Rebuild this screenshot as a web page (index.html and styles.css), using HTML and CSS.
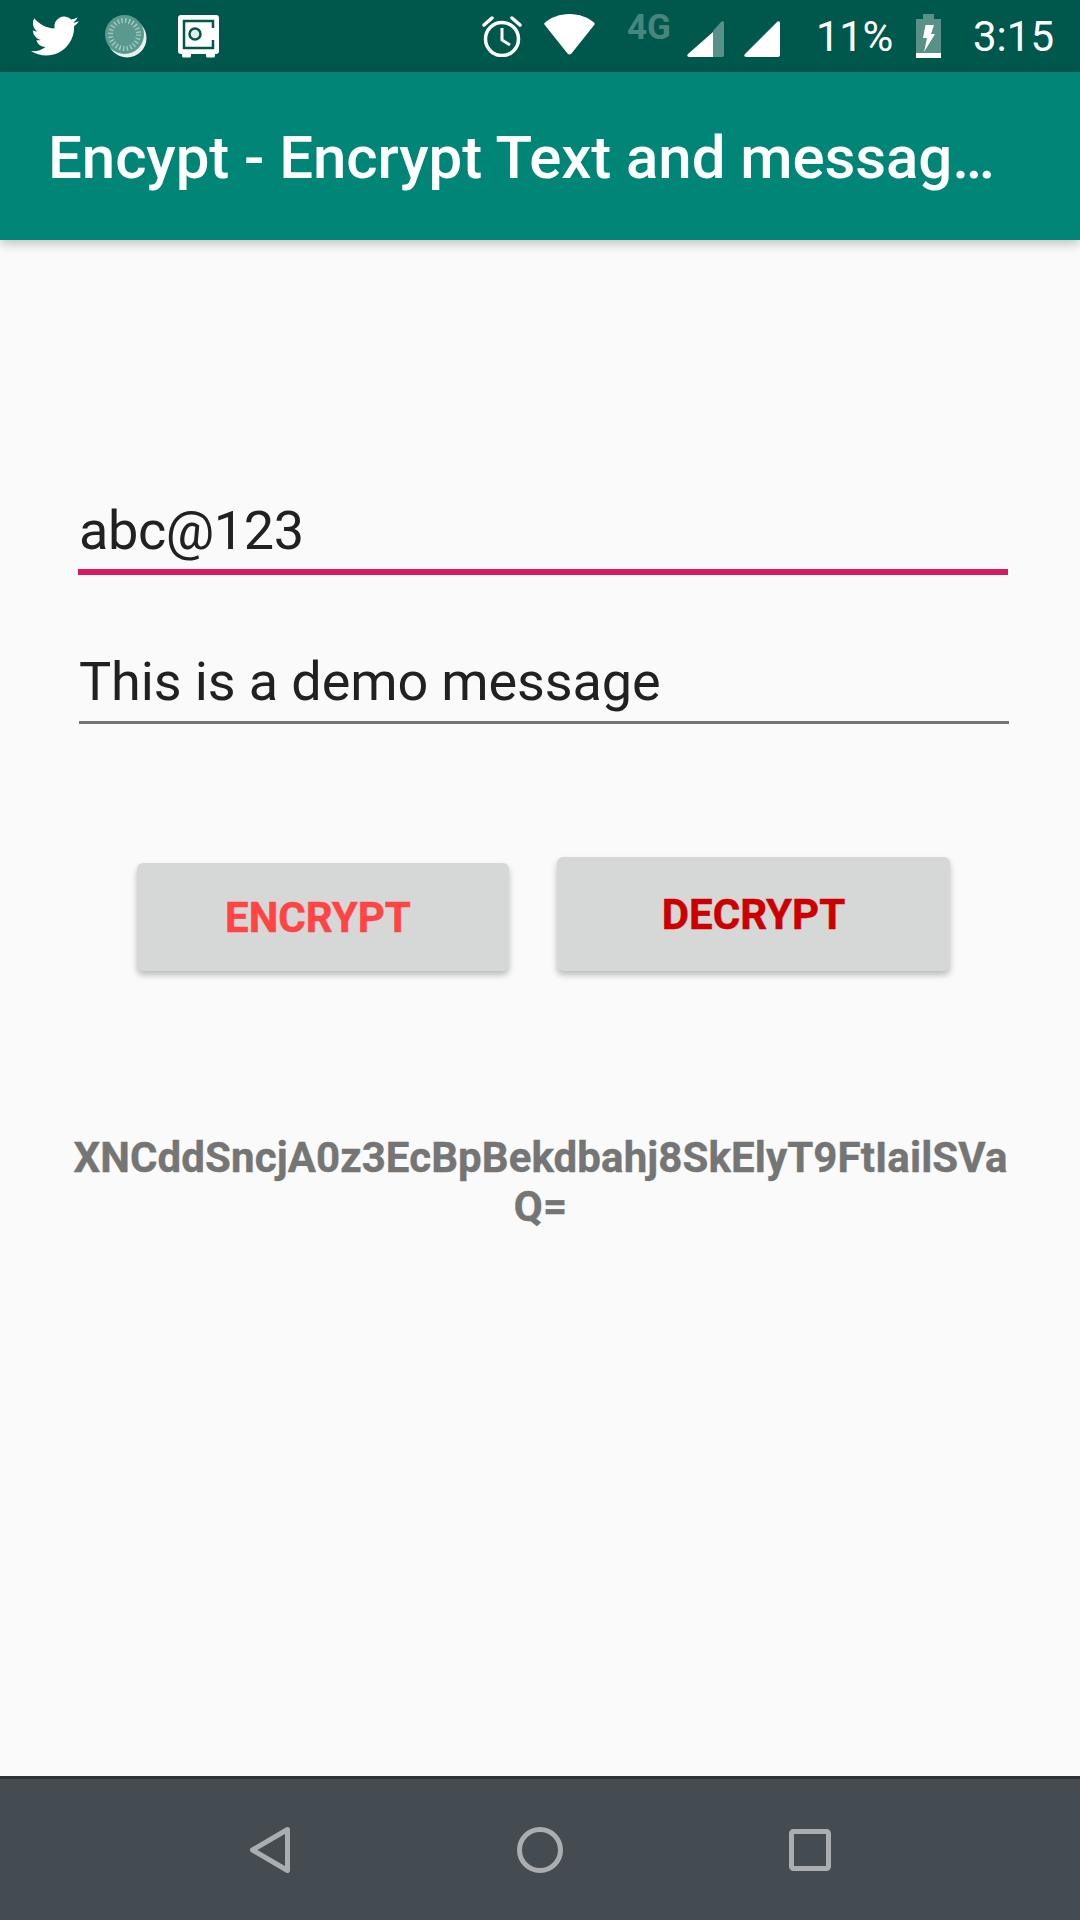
FILE: index.html
```html
<!DOCTYPE html>
<html lang="en">
<head>
  <meta charset="UTF-8">
  <meta name="viewport" content="width=device-width, initial-scale=1">
  <title>Encypt</title>
  <link rel="stylesheet" href="styles.css">
</head>
<body>
  <div class="screen">
    <!-- Status bar -->
    <div class="status-bar">
      <svg class="ic-twitter" viewBox="0 0 24 24"><path fill="#fff" d="M23.953 4.57a10 10 0 01-2.825.775 4.958 4.958 0 002.163-2.723c-.951.555-2.005.959-3.127 1.184a4.92 4.92 0 00-8.384 4.482C7.69 8.095 4.067 6.13 1.64 3.162a4.822 4.822 0 00-.666 2.475c0 1.71.87 3.213 2.188 4.096a4.904 4.904 0 01-2.228-.616v.06a4.923 4.923 0 003.946 4.827 4.996 4.996 0 01-2.212.085 4.936 4.936 0 004.604 3.417 9.867 9.867 0 01-6.102 2.105c-.39 0-.779-.023-1.17-.067a13.995 13.995 0 007.557 2.209c9.053 0 13.998-7.496 13.998-13.985 0-.21 0-.42-.015-.63A9.935 9.935 0 0024 4.59z"/></svg>
      <svg class="ic-spinner" viewBox="0 0 42 44">
        <circle cx="22" cy="24" r="19.500" fill="#e8f0ee"/>
        <circle cx="19.500" cy="20.500" r="19.500" fill="#5a9a8e"/>
        <circle cx="19.500" cy="20.500" r="14" fill="none" stroke="#a5c6bf" stroke-width="5" stroke-dasharray="1.400 2.270"/>
      </svg>
      <svg class="ic-safe" viewBox="0 0 41 43">
        <path fill="#fff" d="M3 0h35a3 3 0 0 1 3 3v33a3 3 0 0 1-3 3h-1v2a1.500 1.500 0 0 1-1.500 1.500h-6A1.500 1.500 0 0 1 28 41v-2H13v2a1.500 1.500 0 0 1-1.500 1.500h-6A1.500 1.500 0 0 1 4 41v-2H3a3 3 0 0 1-3-3V3a3 3 0 0 1 3-3z"/>
        <path fill="none" stroke="#00574b" stroke-width="2.500" d="M35 13V6H6v27h29v-8"/>
        <circle cx="17" cy="19" r="5.500" fill="#e4ece9" stroke="#00574b" stroke-width="2.500"/>
      </svg>

      <div class="status-right">
        <svg class="ic-alarm" viewBox="0 0 40 42">
          <circle cx="20" cy="24" r="16.500" fill="none" stroke="#fff" stroke-width="3.500"/>
          <path d="M20 13v12l8 5" fill="none" stroke="#fff" stroke-width="3"/>
          <path d="M2 10L10 3M38 10L30 3" fill="none" stroke="#fff" stroke-width="3.500" stroke-linecap="round"/>
        </svg>
        <svg class="ic-wifi" viewBox="0 0 51 41"><path fill="#fff" d="M25.500 0C15.500 0 7 3.500 1 8.500c-.8.700-.9 1.500-.4 2.300L23.500 39.500c1 1.300 3 1.300 4 0L50.400 10.800c.5-.8.400-1.600-.4-2.300C44 3.500 35.500 0 25.500 0z"/></svg>
        <span class="net-type">4G</span>
        <svg class="ic-signal-a" viewBox="0 0 37 36">
          <path fill="#fff" fill-opacity=".35" d="M26 10L34 1c1.200-1.300 3-.7 3 1v32c0 1.300-.7 2-2 2H26z"/>
          <path fill="#fff" d="M26 11V36H2c-1.700 0-2.300-1.500-1-3z"/>
        </svg>
        <svg class="ic-signal-b" viewBox="0 0 36 36"><path fill="#fff" d="M33 1c1.200-1.300 3-.7 3 1v32c0 1.300-.7 2-2 2H2c-1.700 0-2.300-1.500-1-3z"/></svg>
        <span class="battery-pct">11%</span>
        <svg class="ic-battery" viewBox="0 0 25 44">
          <path fill="#fff" fill-opacity=".35" d="M0 5h7V0h11v5h7v34H0z"/>
          <rect y="39" width="25" height="5" fill="#fff"/>
          <path fill="#fff" d="M9.500 11H18l-3 9h4L8 38l3-14H7z"/>
        </svg>
        <span class="clock">3:15</span>
      </div>
    </div>

    <!-- Action bar -->
    <header class="app-bar">Encypt - Encrypt Text and messag…</header>

    <main class="content">
      <div class="field field-focused">abc@123</div>
      <div class="field field-idle">This is a demo message</div>

      <div class="actions">
        <button class="btn btn-encrypt">ENCRYPT</button>
        <button class="btn btn-decrypt">DECRYPT</button>
      </div>

      <p class="output">XNCddSncjA0z3EcBpBekdbahj8SkElyT9FtIailSVaQ=</p>
    </main>

    <!-- Navigation bar -->
    <nav class="nav-bar">
      <svg class="ic-back" viewBox="0 0 40 46"><path d="M37.500 2.500L2.500 23l35 20.500z" fill="none" stroke="#aaaeb0" stroke-width="5" stroke-linejoin="round"/></svg>
      <svg class="ic-home" viewBox="0 0 46 46"><circle cx="23" cy="23" r="20.500" fill="none" stroke="#aaaeb0" stroke-width="5"/></svg>
      <svg class="ic-recents" viewBox="0 0 42 42"><rect x="2.500" y="2.500" width="37" height="37" rx="2" fill="none" stroke="#aaaeb0" stroke-width="5"/></svg>
    </nav>
  </div>
</body>
</html>
```

FILE: styles.css
```css
/* Base */
html, body {
  margin: 0;
  padding: 0;
  height: 100%;
  background-color: #fafafa;
  font-family: Roboto, sans-serif;
}
.screen {
  display: flex;
  flex-direction: column;
  height: 1920px;
  overflow: hidden;
}
svg {
  display: block;
  flex: none;
}

/* Status bar */
.status-bar {
  display: flex;
  align-items: center;
  flex: none;
  height: 72px;
  padding: 0 26px 0 31px;
  box-sizing: border-box;
  background-color: #00574b;
  color: #fff;
}
.ic-twitter { width: 48px; height: 48px; }
.ic-spinner { width: 42px; height: 44px; margin-left: 26px; }
.ic-safe { width: 41px; height: 43px; margin-left: 31px; }
.status-right {
  display: flex;
  align-items: center;
  margin-left: auto;
}
.ic-alarm { width: 40px; height: 42px; }
.ic-wifi { width: 51px; height: 41px; margin-left: 22px; margin-top: -3px; }
.net-type {
  margin-left: 32px;
  margin-top: -18px;
  font-size: 35px;
  font-weight: 700;
  line-height: 1;
  color: rgba(255, 255, 255, 0.3);
}
.ic-signal-a { width: 37px; height: 36px; margin-left: 16px; margin-top: 6px; }
.ic-signal-b { width: 36px; height: 36px; margin-left: 20px; margin-top: 6px; }
.battery-pct,
.clock {
  margin-top: 2px;
  font-size: 42px;
  line-height: 1;
}
.battery-pct { margin-left: 36px; letter-spacing: -0.3px; }
.ic-battery { width: 25px; height: 44px; margin-left: 23px; }
.clock { margin-left: 32px; }

/* Action bar */
.app-bar {
  flex: none;
  position: relative;
  height: 168px;
  padding-left: 48px;
  background-color: #008577;
  color: #fff;
  font-size: 60px;
  font-weight: 500;
  line-height: 172px;
  letter-spacing: -0.08px;
  white-space: nowrap;
  box-shadow: 0 4px 10px rgba(0, 0, 0, 0.22);
}

/* Form */
.content {
  flex: 1;
  padding: 250px 72px 0 78px;
}
.field {
  box-sizing: border-box;
  font-size: 54px;
  letter-spacing: -0.12px;
  color: #212121;
}
.field-focused {
  height: 85px;
  padding-left: 1px;
  letter-spacing: -0.4px;
  line-height: 82px;
  border-bottom: 6px solid #d81b60;
}
.field-idle {
  height: 85px;
  margin: 64px -1px 0 1px;
  line-height: 86px;
  border-bottom: 3px solid #757575;
}

/* Buttons */
.actions {
  display: flex;
  align-items: flex-end;
  margin-top: 133px;
  padding-left: 59px;
}
.btn {
  padding: 0;
  border: none;
  border-radius: 6px;
  background-color: #d6d7d7;
  font-family: Roboto, sans-serif;
  font-size: 42px;
  font-weight: 700;
  -webkit-text-stroke: 0.5px currentColor;
  box-shadow: 0 4px 6px rgba(0, 0, 0, 0.25);
}
.btn-encrypt {
  width: 372px;
  height: 108px;
  padding-right: 10px;
  color: #ff4444;
}
.btn-decrypt {
  width: 393px;
  height: 114px;
  margin-left: 48px;
  color: #cc0000;
}

/* Encrypted output */
.output {
  margin: 162px 0 0 -8px;
  width: 941px;
  font-size: 42px;
  font-weight: 700;
  line-height: 49px;
  letter-spacing: 0.1px;
  -webkit-text-stroke: 0.4px currentColor;
  text-align: center;
  word-break: break-all;
  color: #757575;
}

/* Navigation bar */
.nav-bar {
  flex: none;
  display: flex;
  align-items: center;
  height: 144px;
  padding-left: 250px;
  box-sizing: border-box;
  border-top: 3px solid #2d3235;
  background-color: #454c51;
}
.ic-back { width: 40px; height: 46px; }
.ic-home { width: 46px; height: 46px; margin-left: 227px; }
.ic-recents { width: 42px; height: 42px; margin-left: 226px; }
```
